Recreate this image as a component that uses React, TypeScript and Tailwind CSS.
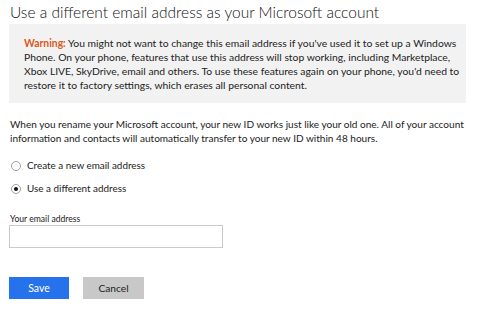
import React from "react";

export default function App() {
  return (
    <div
      className="w-[480px] h-[309px] overflow-hidden bg-white text-[#222]"
      style={{ fontFamily: 'Lato, "Noto Sans", sans-serif' }}
    >
      <h1 className="pl-[10px] pt-[1px] text-[15.5px] leading-[22px] font-light text-[#111] whitespace-nowrap">
        Use a different email address as your Microsoft account
      </h1>
      <div className="ml-[9px] mt-[1px] w-[457px] h-[79px] bg-[#f2f2f2] pl-[15px] pt-[12px] text-[10.35px] leading-[14px] whitespace-nowrap">
        <span className="font-bold text-[#d75a1b]">Warning:</span> You might not want to change this email address if you've used it to set up a Windows
        <br />
        Phone. On your phone, features that use this address will stop working, including Marketplace,
        <br />
        Xbox LIVE, SkyDrive, email and others. To use these features again on your phone, you'd need to
        <br />
        restore it to factory settings, which erases all personal content.
      </div>
      <p className="pl-[10px] mt-[14px] text-[10.05px] leading-[14px] whitespace-nowrap">
        When you rename your Microsoft account, your new ID works just like your old one. All of your account
        <br />
        information and contacts will automatically transfer to your new ID within 48 hours.
      </p>
      <div className="pl-[11px] mt-[13px] flex flex-col gap-[8px] text-[9.9px] leading-[15px]">
        <label className="flex items-center gap-[6px]">
          <span className="w-[10px] h-[10px] rounded-full border border-[#a0a0a0] bg-white" />
          <span>Create a new email address</span>
        </label>
        <label className="flex items-center gap-[6px]">
          <span className="w-[10px] h-[10px] rounded-full border border-[#a0a0a0] bg-white flex items-center justify-center">
            <span className="w-[4px] h-[4px] rounded-full bg-[#111]" />
          </span>
          <span>Use a different address</span>
        </label>
      </div>
      <div className="pl-[10px] mt-[17px] text-[8.6px] leading-[12px]">Your email address</div>
      <input
        type="text"
        className="block ml-[9px] mt-[0px] w-[214px] h-[23px] border border-[#cacaca] bg-white outline-none"
      />
      <div className="pl-[9px] mt-[29px] flex gap-[14px]">
        <button className="w-[60px] h-[22px] bg-[#2672ec] text-white text-[10.5px] leading-[22px]">
          Save
        </button>
        <button className="w-[61px] h-[22px] bg-[#c8c8c8] text-[#222] text-[10.2px] leading-[22px]">
          Cancel
        </button>
      </div>
    </div>
  );
}
